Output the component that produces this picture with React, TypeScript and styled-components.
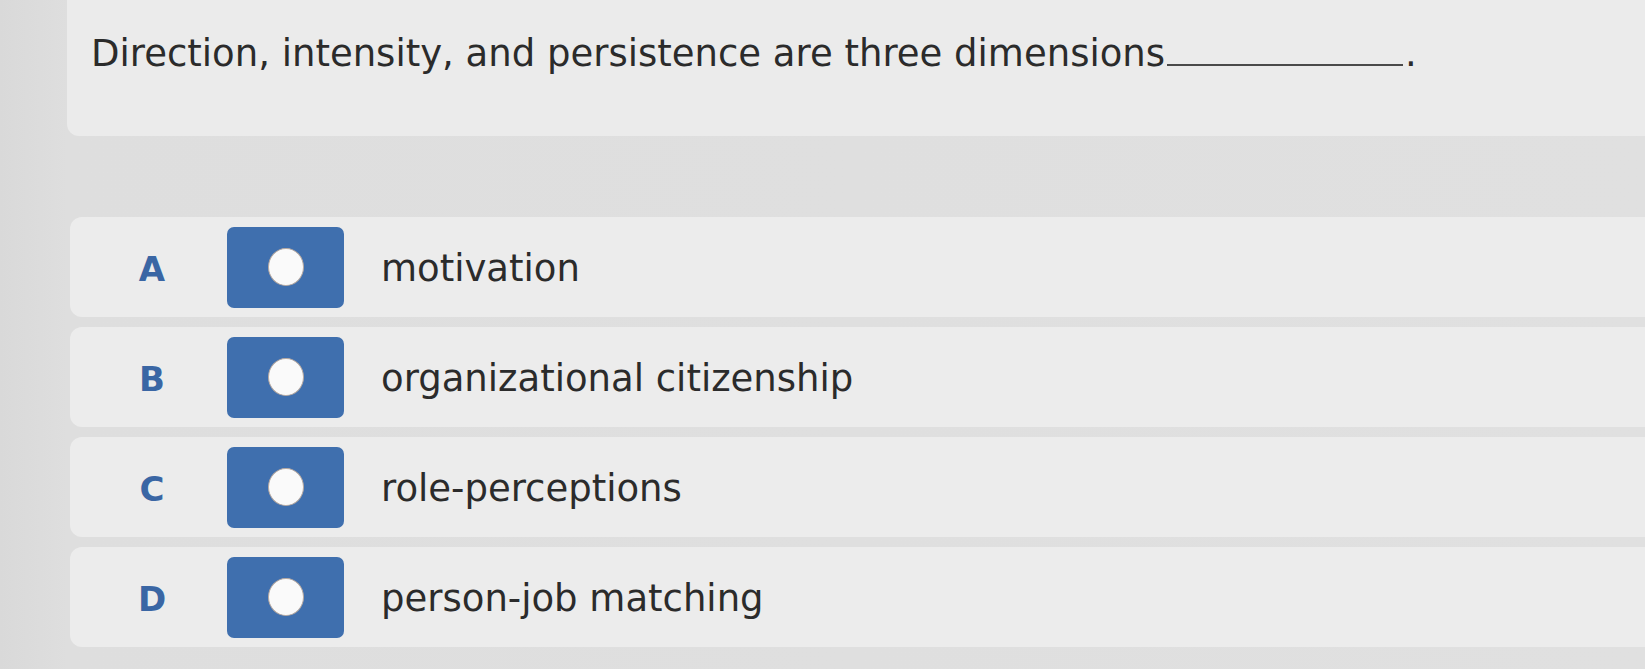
import React from "react";
import styled, { createGlobalStyle } from "styled-components";

const options = [
  { letter: "A", text: "motivation" },
  { letter: "B", text: "organizational citizenship" },
  { letter: "C", text: "role-perceptions" },
  { letter: "D", text: "person-job matching" },
];

const App = () => {
  return (
    <>
      <GlobalStyle />
      <PageStyle>
        <QuestionCardStyle>
          <QuestionTextStyle>
            Direction, intensity, and persistence are three dimensions
            <BlankStyle />
            <PeriodStyle>.</PeriodStyle>
          </QuestionTextStyle>
        </QuestionCardStyle>
        <OptionListStyle>
          {options.map((option) => (
            <OptionRowStyle key={option.letter}>
              <LetterStyle>{option.letter}</LetterStyle>
              <RadioButtonStyle type="button" aria-label={option.text}>
                <RadioDotStyle />
              </RadioButtonStyle>
              <OptionTextStyle>{option.text}</OptionTextStyle>
            </OptionRowStyle>
          ))}
        </OptionListStyle>
      </PageStyle>
    </>
  );
};

export default App;

const GlobalStyle = createGlobalStyle`
  html, body {
    margin: 0;
    padding: 0;
    background-color: #dcdcdc;
    overflow: hidden;
  }
  * {
    box-sizing: border-box;
  }
`;

const PageStyle = styled.div`
  width: 1645px;
  height: 669px;
  padding-left: 67px;
  display: flex;
  flex-direction: column;
  background: linear-gradient(90deg, #d9d9d9 0px, #dedede 67px, #e0e0e0 100%);
  font-family: "DejaVu Sans", Verdana, sans-serif;
`;

const QuestionCardStyle = styled.div`
  height: 136px;
  padding: 32px 0 0 24px;
  background-color: #ebebeb;
  border-radius: 0 0 0 12px;
`;

const QuestionTextStyle = styled.p`
  margin: 0;
  font-size: 37px;
  line-height: 44px;
  color: #2b2b2b;
  white-space: nowrap;
`;

const BlankStyle = styled.span`
  display: inline-block;
  width: 236px;
  height: 10px;
  margin-left: 2px;
  border-bottom: 2px solid #4a4a4a;
  vertical-align: baseline;
`;

const PeriodStyle = styled.span`
  margin-left: 2px;
`;

const OptionListStyle = styled.div`
  margin: 81px 0 0 3px;
  display: flex;
  flex-direction: column;
  gap: 10px;
`;

const OptionRowStyle = styled.div`
  height: 100px;
  display: flex;
  align-items: center;
  padding-left: 40px;
  background-color: #ececec;
  border-radius: 12px 0 0 12px;
`;

const LetterStyle = styled.span`
  width: 84px;
  padding-top: 4px;
  text-align: center;
  font-size: 34px;
  font-weight: 700;
  color: #3a66a4;
`;

const RadioButtonStyle = styled.button`
  margin-left: 33px;
  width: 117px;
  height: 81px;
  padding: 0;
  display: flex;
  align-items: center;
  justify-content: center;
  background-color: #3f6fae;
  border: none;
  border-radius: 7px;
  cursor: pointer;
`;

const RadioDotStyle = styled.span`
  width: 36px;
  height: 38px;
  border-radius: 50%;
  background-color: #fafafa;
  border: 1px solid #b7a9a0;
`;

const OptionTextStyle = styled.span`
  margin-left: 37px;
  padding-top: 3px;
  font-size: 37px;
  color: #2b2b2b;
`;
